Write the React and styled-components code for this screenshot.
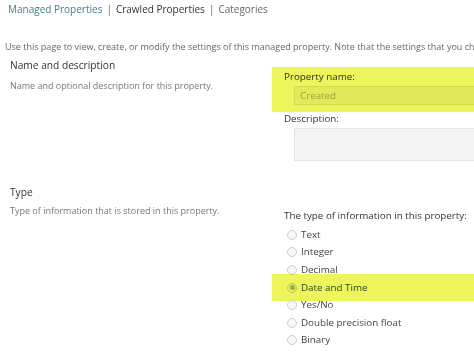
import React from "react";
import styled, { createGlobalStyle } from "styled-components";

// Page-wide reset and font
const GlobalStyle = createGlobalStyle`
  html, body {
    margin: 0;
    padding: 0;
    background: #ffffff;
    overflow: hidden;
  }
  body {
    font-family: "Open Sans", "Noto Sans", sans-serif;
    color: #333;
  }
`;

const Page = styled.div`
  width: 474px;
  height: 353px;
  overflow: hidden;
  white-space: nowrap;
`;

// Breadcrumb-like top links
const Nav = styled.div`
  display: flex;
  align-items: center;
  gap: 4px;
  padding: 2px 0 0 8px;
  height: 14px;
  font-size: 10px;
  line-height: 14px;
`;

const NavLink = styled.span`
  color: ${(p) => p.$color};
`;

const Sep = styled.span`
  color: #666;
`;

const Intro = styled.p`
  margin: 25px 0 0 5px;
  font-size: 9px;
  line-height: 12px;
  color: #666;
  overflow: hidden;
`;

// Two column section: label/description on the left, fields on the right
const Section = styled.section`
  display: grid;
  grid-template-columns: 272px 1fr;
  margin-top: ${(p) => p.$top}px;
`;

const Left = styled.div`
  display: flex;
  flex-direction: column;
  gap: ${(p) => p.$gap}px;
  padding-left: 10px;
`;

const Title = styled.div`
  font-size: 10.2px;
  line-height: 14px;
  color: #333;
`;

const Desc = styled.div`
  font-size: 9px;
  line-height: 14px;
  color: #777;
`;

const Right = styled.div`
  display: flex;
  flex-direction: column;
  padding-top: ${(p) => p.$top}px;
`;

const FieldGroup = styled.div`
  position: relative;
  display: flex;
  flex-direction: column;
  padding: ${(p) => p.$pad};
`;

// Yellow marker drawn over the screenshot
const Marker = styled.div`
  position: absolute;
  left: 0;
  right: 0;
  top: ${(p) => p.$top || 0}px;
  bottom: ${(p) => p.$bottom || 0}px;
  background: #ecf65c;
  mix-blend-mode: multiply;
  pointer-events: none;
`;

const Label = styled.div`
  font-size: 9.8px;
  line-height: 14px;
  color: #333;
`;

const Input = styled.div`
  margin: ${(p) => p.$margin || "0"};
  margin-left: 10px;
  height: ${(p) => p.$h}px;
  box-sizing: border-box;
  background: #f4f4f4;
  border: 1px solid #e6e6e6;
  border-right: none;
  padding: 2px 5px;
  font-size: 9.8px;
  line-height: 14px;
  color: #aaaaaa;
`;

const RadioList = styled.div`
  display: flex;
  flex-direction: column;
  margin-top: 3px;
`;

const RadioRow = styled.div`
  position: relative;
  display: flex;
  align-items: center;
  gap: 4px;
  height: 17.6px;
  padding-left: 15px;
  font-size: 9.8px;
  color: #444;
`;

const Radio = styled.span`
  width: 10px;
  height: 10px;
  box-sizing: border-box;
  border-radius: 50%;
  border: 1px solid #cfcfcf;
  background: #f7f7f7;
  display: flex;
  align-items: center;
  justify-content: center;

  &::after {
    content: "";
    width: 5px;
    height: 5px;
    border-radius: 50%;
    background: ${(p) => (p.$checked ? "#b0b0b0" : "transparent")};
  }
`;

const OptionText = styled.span`
  line-height: 14px;
`;

const types = [
  "Text",
  "Integer",
  "Decimal",
  "Date and Time",
  "Yes/No",
  "Double precision float",
  "Binary",
];

const App = () => {
  return (
    <Page>
      <GlobalStyle />
      <Nav>
        <NavLink $color="#3f7f8e">Managed Properties</NavLink>
        <Sep>|</Sep>
        <NavLink $color="#333">Crawled Properties</NavLink>
        <Sep>|</Sep>
        <NavLink $color="#666">Categories</NavLink>
      </Nav>
      <Intro>
        Use this page to view, create, or modify the settings of this managed
        property. Note that the settings that you change here will apply to
        all content.
      </Intro>

      <Section $top={5}>
        <Left $gap={7}>
          <Title>Name and description</Title>
          <Desc>Name and optional description for this property.</Desc>
        </Left>
        <Right $top={9}>
          <FieldGroup $pad="3px 0 7px 12px">
            <Label>Property name:</Label>
            <Input $h={19} $margin="2px 0 0 0">
              Created
            </Input>
            <Marker />
          </FieldGroup>
          <FieldGroup $pad="0 0 0 12px">
            <Label>Description:</Label>
            <Input $h={33} $margin="2px 0 0 0" />
          </FieldGroup>
        </Right>
      </Section>

      <Section $top={24}>
        <Left $gap={5}>
          <Title>Type</Title>
          <Desc>Type of information that is stored in this property.</Desc>
        </Left>
        <Right $top={24}>
          <FieldGroup $pad="0 0 0 12px">
            <Label>The type of information in this property:</Label>
          </FieldGroup>
          <RadioList>
            {types.map((t) => (
              <RadioRow key={t}>
                <Radio $checked={t === "Date and Time"} />
                <OptionText>{t}</OptionText>
                {t === "Date and Time" && <Marker $top={-5} $bottom={-5} />}
              </RadioRow>
            ))}
          </RadioList>
        </Right>
      </Section>
    </Page>
  );
};

export default App;
